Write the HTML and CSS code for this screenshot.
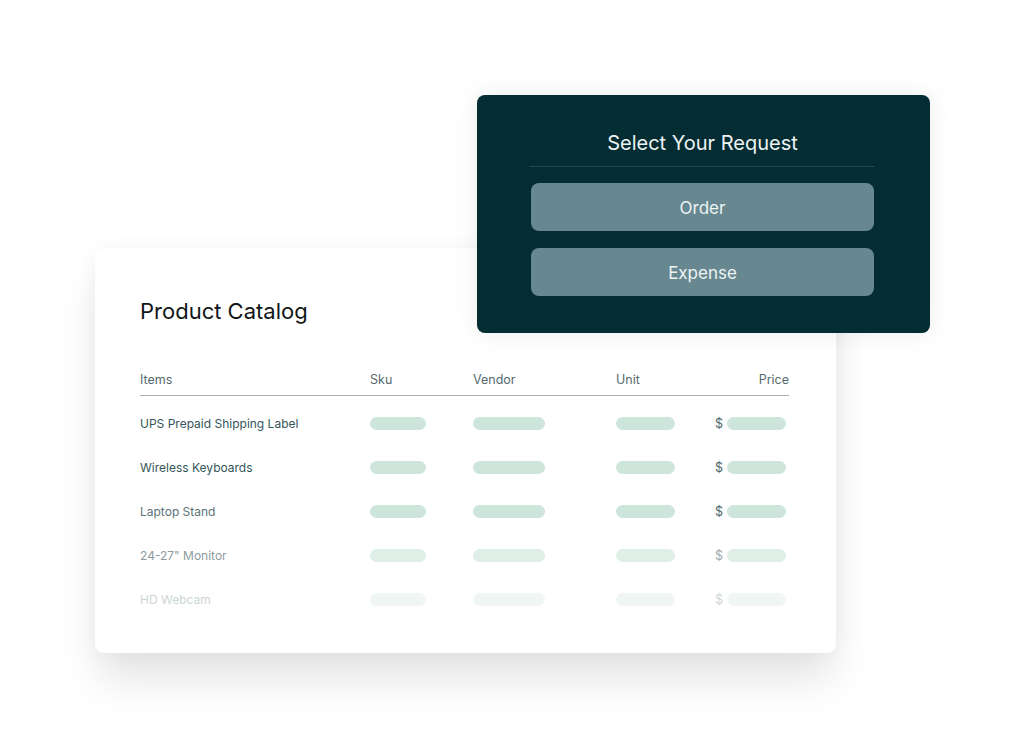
FILE: index.html
```html
<!DOCTYPE html>
<html>
<head>
<meta charset="utf-8">
<link rel="stylesheet" href="styles.css">
</head>
<body>
<div class="stage">
  <section class="catalog">
    <h1 class="catalog-title">Product Catalog</h1>
    <div class="table">
      <div class="thead">
        <div>Items</div><div>Sku</div><div>Vendor</div><div>Unit</div><div class="right">Price</div>
      </div>
      <div class="row r1">
        <div class="item">UPS Prepaid Shipping Label</div>
        <div><span class="pill sku"></span></div>
        <div><span class="pill vendor"></span></div>
        <div><span class="pill unit"></span></div>
        <div class="price"><span class="dollar">$</span><span class="pill pr"></span></div>
      </div>
      <div class="row r2">
        <div class="item">Wireless Keyboards</div>
        <div><span class="pill sku"></span></div>
        <div><span class="pill vendor"></span></div>
        <div><span class="pill unit"></span></div>
        <div class="price"><span class="dollar">$</span><span class="pill pr"></span></div>
      </div>
      <div class="row r3">
        <div class="item">Laptop Stand</div>
        <div><span class="pill sku"></span></div>
        <div><span class="pill vendor"></span></div>
        <div><span class="pill unit"></span></div>
        <div class="price"><span class="dollar">$</span><span class="pill pr"></span></div>
      </div>
      <div class="row r4">
        <div class="item">24-27" Monitor</div>
        <div><span class="pill sku"></span></div>
        <div><span class="pill vendor"></span></div>
        <div><span class="pill unit"></span></div>
        <div class="price"><span class="dollar">$</span><span class="pill pr"></span></div>
      </div>
      <div class="row r5">
        <div class="item">HD Webcam</div>
        <div><span class="pill sku"></span></div>
        <div><span class="pill vendor"></span></div>
        <div><span class="pill unit"></span></div>
        <div class="price"><span class="dollar">$</span><span class="pill pr"></span></div>
      </div>
    </div>
  </section>
  <section class="request">
    <h2 class="request-title">Select Your Request</h2>
    <div class="divider"></div>
    <div class="btn">Order</div>
    <div class="btn">Expense</div>
  </section>
</div>
</body>
</html>
```
FILE: styles.css
```css
* { box-sizing: border-box; }
html, body { margin: 0; padding: 0; background: #ffffff; }
body { font-family: Inter, "Noto Sans", "Liberation Sans", sans-serif; width: 1024px; height: 748px; overflow: hidden; }
.stage { position: relative; width: 1024px; height: 748px; padding-top: 248px; padding-left: 95px; }
.catalog {
  width: 741px; height: 405px; background: #fff; border-radius: 9px;
  padding: 49px 0 0 45px;
  box-shadow: 0 0 22px rgba(0,0,0,0.045), 0 30px 42px -4px rgba(0,0,0,0.11);
}
.catalog-title { margin: 0; font-size: 22px; line-height: 28px; font-weight: 400; color: #111617; }
.table { width: 649px; margin-top: 47px; }
.thead, .row { display: grid; grid-template-columns: 230px 103px 143px 99px 74px; align-items: center; }
.thead { font-size: 12.5px; line-height: 16px; color: #566a6e; padding-bottom: 7px; border-bottom: 1.5px solid #a7b3b5; }
.right { text-align: right; }
.row { height: 44px; font-size: 12px; color: #34555a; }
.thead + .row { margin-top: 5px; }
.pill { display: block; height: 13px; border-radius: 7px; background: #cde5db; }
.sku { width: 56px; }
.vendor { width: 72px; }
.unit { width: 59px; }
.pr { width: 59px; }
.price { display: flex; align-items: center; gap: 4px; }
.dollar { font-size: 12.5px; color: #4c6468; width: 8px; }
.r3 { color: #5c7377; }
.r4 { color: #8c9c9e; }
.r4 .pill { background: #e0eee8; }
.r4 .dollar { color: #9aa9ab; }
.r5 { color: #ccd5d6; }
.r5 .pill { background: #eff6f3; }
.r5 .dollar { color: #ccd5d6; }
.request {
  position: absolute; left: 477px; top: 95px; width: 453px; height: 238px;
  background: #032c33; border-radius: 8px; padding: 36px 56px 0 54px;
  box-shadow: 0 0 24px rgba(0,0,0,0.08);
}
.request-title { margin: 0; text-align: center; font-size: 20px; line-height: 24px; font-weight: 400; color: #eef3f3; }
.divider { height: 1px; background: #24484e; margin: 11px -1px 16px -2px; }
.btn {
  height: 48px; border-radius: 8px; background: #678890; color: #eef3f3;
  display: flex; align-items: center; justify-content: center;
  font-size: 17px; font-weight: 400; padding-top: 1px;
}
.btn + .btn { margin-top: 17px; }
```
